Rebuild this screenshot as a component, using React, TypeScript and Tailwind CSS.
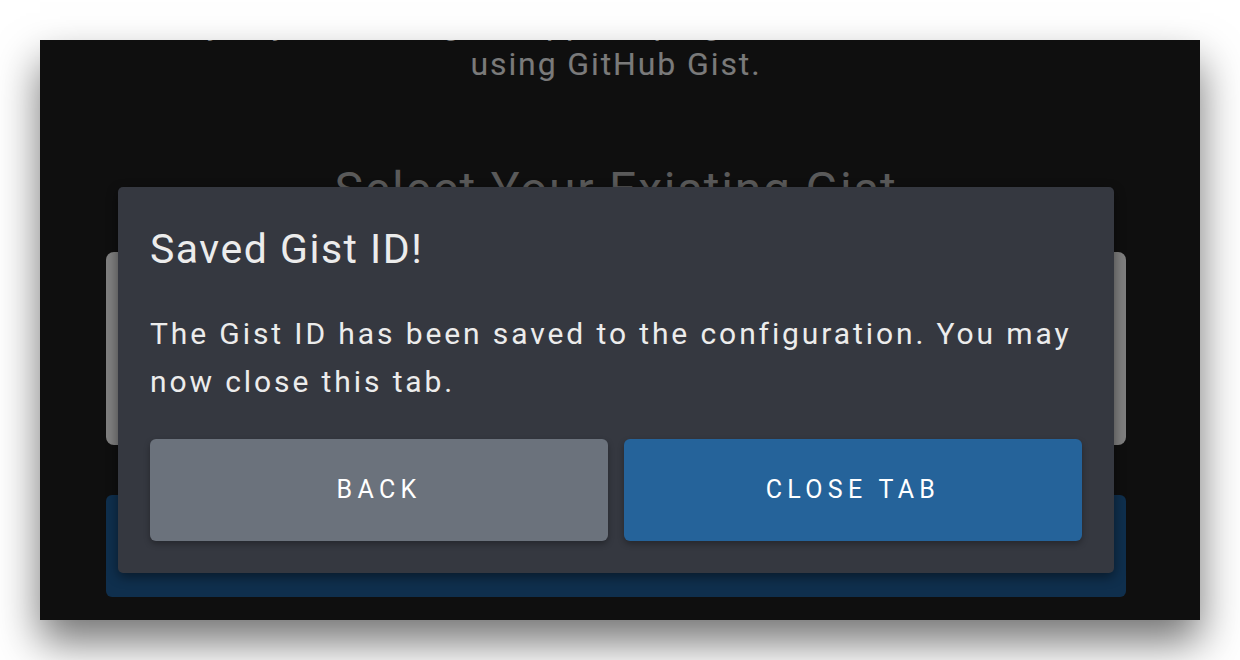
export default function App() {
  return (
    <div className="min-h-screen bg-white p-[40px] font-['Roboto',sans-serif]">
      {/* app window */}
      <div className="relative h-[580px] w-[1160px] overflow-hidden bg-[#1f1f1f] shadow-[0_22px_40px_rgba(0,0,0,0.55)]">
        <div className="flex flex-col items-center pl-[66px] pr-[74px]">
          <p className="mt-[-36px] text-center text-[32px] leading-[40px] tracking-[1.9px] text-[#f4f4f4]">
            Sync your settings, snippets, plugins and the rest of it
            <br />
            using GitHub Gist.
          </p>
          <h2 className="mt-[78px] text-[48px] leading-[56px] tracking-[1.8px] text-[#b4b4b4]">
            Select Your Existing Gist
          </h2>
          <div className="mt-[34px] h-[193px] w-full rounded-[8px] bg-white" />
          <div className="mt-[50px] h-[102px] w-full rounded-[6px] bg-[#1e5e9a]" />
        </div>

        {/* backdrop */}
        <div className="absolute inset-0 bg-black/50" />

        {/* dialog */}
        <div className="absolute left-[78px] top-[147px] w-[996px] rounded-[5px] bg-[#353840] px-[32px] pb-[32px] pt-[36px] shadow-[0_4px_12px_rgba(0,0,0,0.45)]">
          <h1 className="text-[41px] leading-[52px] tracking-[1.5px] text-[#ececec]">Saved Gist ID!</h1>
          <p className="mt-[35px] text-[30px] leading-[48px] tracking-[2.9px] text-[#ececec]">
            The Gist ID has been saved to the configuration. You may now close this tab.
          </p>
          <div className="mt-[33px] grid grid-cols-2 gap-[16px]">
            <button className="h-[102px] rounded-[6px] bg-[#6b727c] text-[25px] tracking-[5.3px] text-white shadow-[0_3px_6px_rgba(0,0,0,0.3)]">
              BACK
            </button>
            <button className="h-[102px] rounded-[6px] bg-[#25639a] text-[25px] tracking-[5.3px] text-white shadow-[0_3px_6px_rgba(0,0,0,0.3)]">
              CLOSE TAB
            </button>
          </div>
        </div>
      </div>
    </div>
  )
}
